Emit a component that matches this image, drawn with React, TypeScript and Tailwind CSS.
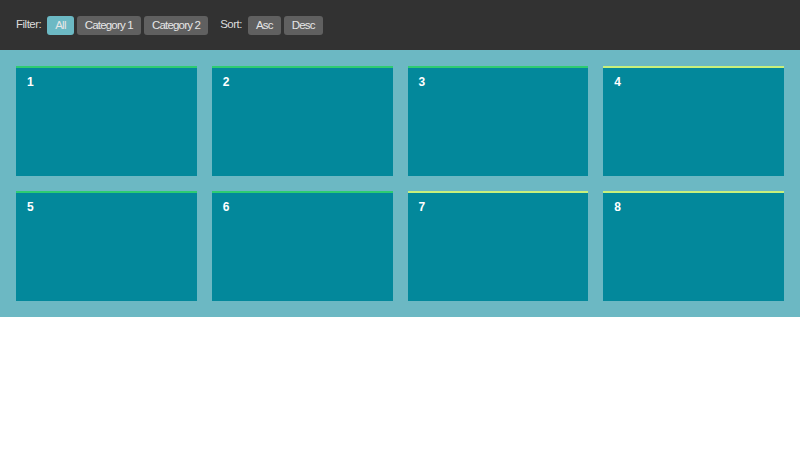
import { useState } from "react";

type Item = { id: number; cat: 1 | 2 };

const ITEMS: Item[] = [
  { id: 1, cat: 1 },
  { id: 2, cat: 1 },
  { id: 3, cat: 1 },
  { id: 4, cat: 2 },
  { id: 5, cat: 1 },
  { id: 6, cat: 1 },
  { id: 7, cat: 2 },
  { id: 8, cat: 2 },
];

const FILTERS = [
  { key: 0, label: "All" },
  { key: 1, label: "Category 1" },
  { key: 2, label: "Category 2" },
];

export default function App() {
  const [filter, setFilter] = useState(0);
  const [asc, setAsc] = useState(true);

  const shown = ITEMS.filter(i => filter === 0 || i.cat === filter).sort((a, b) =>
    asc ? a.id - b.id : b.id - a.id
  );

  const btn = "rounded-[3px] px-2 h-[19px] leading-[19px] text-[11.5px] tracking-[-0.8px] text-[#e6e6e6]";

  return (
    <div className="min-h-[450px] bg-white font-['Liberation_Sans',Arial,sans-serif]">
      <header className="flex h-[50px] items-center bg-[#323232] px-4 text-[11.5px] tracking-[-0.5px] text-[#dcdcdc]">
        <span className="mr-[6px]">Filter:</span>
        <div className="flex gap-[3px]">
          {FILTERS.map(f => (
            <button key={f.key} type="button" onClick={() => setFilter(f.key)}
              className={`${btn} ${filter === f.key ? "bg-[#6cb9c4]" : "bg-[#606060]"}`}>
              {f.label}
            </button>
          ))}
        </div>
        <span className="ml-3 mr-[6px]">Sort:</span>
        <div className="flex gap-[3px]">
          <button type="button" onClick={() => setAsc(true)} className={`${btn} bg-[#606060]`}>Asc</button>
          <button type="button" onClick={() => setAsc(false)} className={`${btn} bg-[#606060]`}>Desc</button>
        </div>
      </header>

      <main className="grid grid-cols-4 gap-[15px] bg-[#6cb8c3] p-4">
        {shown.map(item => (
          <div key={item.id}
            className={`h-[110px] border-t-2 bg-[#03889b] px-[11px] pt-[5px] text-[12px] font-bold text-white ${
              item.cat === 1 ? "border-[#2ecc71]" : "border-[#c8f07c]"
            }`}>
            {item.id}
          </div>
        ))}
      </main>
    </div>
  );
}
